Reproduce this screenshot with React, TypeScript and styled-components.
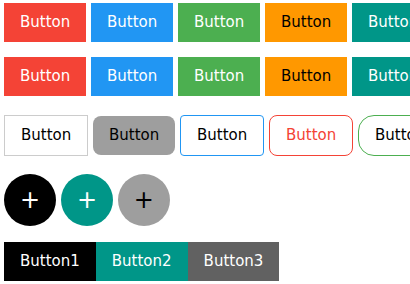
import React from "react";
import styled, { createGlobalStyle, css } from "styled-components";

const Global = createGlobalStyle`
  html, body {
    margin: 0;
    padding: 0;
    overflow: hidden;
    background: #fff;
  }
  body {
    font-family: "DejaVu Sans", Verdana, sans-serif;
    font-size: 15px;
    line-height: 1.5;
    color: #000;
  }
`;

const Page = styled.div`
  display: flex;
  flex-direction: column;
  align-items: flex-start;
  padding: 3px 0 0 4px;
  width: 600px;
`;

const Row = styled.div<{ $top?: number; $gap?: number }>`
  display: flex;
  flex-wrap: nowrap;
  align-items: baseline;
  gap: ${(p) => (p.$gap ?? 4.77)}px;
  margin-top: ${(p) => p.$top ?? 0}px;
`;

const Btn = styled.button<{
  $bg?: string;
  $fg?: string;
  $border?: string;
  $radius?: number;
}>`
  font-family: inherit;
  font-size: 15px;
  line-height: 1.5;
  padding: 8px 16px;
  margin: 0;
  white-space: nowrap;
  cursor: pointer;
  background: ${(p) => p.$bg ?? "#fff"};
  color: ${(p) => p.$fg ?? "#000"};
  border: ${(p) => (p.$border ? `1px solid ${p.$border}` : "none")};
  border-radius: ${(p) => p.$radius ?? 0}px;
  flex: none;
`;

const Circle = styled.button<{ $bg: string; $fg: string }>`
  font-family: inherit;
  font-size: 24px;
  line-height: 1.5;
  padding: 8px 16px;
  margin: 0;
  border: none;
  border-radius: 50%;
  background: ${(p) => p.$bg};
  color: ${(p) => p.$fg};
  flex: none;
`;

const Bar = styled.div`
  display: flex;
  margin-top: 16px;
`;

const BarItem = styled.button<{ $bg: string }>`
  font-family: inherit;
  font-size: 15px;
  line-height: 1.5;
  padding: 8px 16px;
  margin: 0;
  border: none;
  background: ${(p) => p.$bg};
  color: #fff;
`;

const solid = [
  { bg: "#f44336", fg: "#fff" },
  { bg: "#2196F3", fg: "#fff" },
  { bg: "#4CAF50", fg: "#fff" },
  { bg: "#ff9800", fg: "#000" },
  { bg: "#009688", fg: "#fff" },
];

export default function App() {
  return (
    <>
      <Global />
      <Page>
        <Row>
          {solid.map((s, i) => (
            <Btn key={i} $bg={s.bg} $fg={s.fg}>
              Button
            </Btn>
          ))}
        </Row>
        <Row $top={15.5}>
          {solid.map((s, i) => (
            <Btn key={i} $bg={s.bg} $fg={s.fg}>
              Button
            </Btn>
          ))}
        </Row>
        <Row $top={19.5}>
          <Btn $border="#ccc">Button</Btn>
          <Btn $bg="#9e9e9e" $radius={8}>
            Button
          </Btn>
          <Btn $border="#2196F3" $radius={4}>
            Button
          </Btn>
          <Btn $border="#f44336" $fg="#f44336" $radius={8}>
            Button
          </Btn>
          <Btn $border="#4CAF50" $radius={16}>
            Button
          </Btn>
        </Row>
        <Row $top={18.5}>
          <Circle $bg="#000" $fg="#fff">+</Circle>
          <Circle $bg="#009688" $fg="#fff">+</Circle>
          <Circle $bg="#9e9e9e" $fg="#000">+</Circle>
        </Row>
        <Bar>
          <BarItem $bg="#000">Button1</BarItem>
          <BarItem $bg="#009688">Button2</BarItem>
          <BarItem $bg="#616161">Button3</BarItem>
        </Bar>
      </Page>
    </>
  );
}
